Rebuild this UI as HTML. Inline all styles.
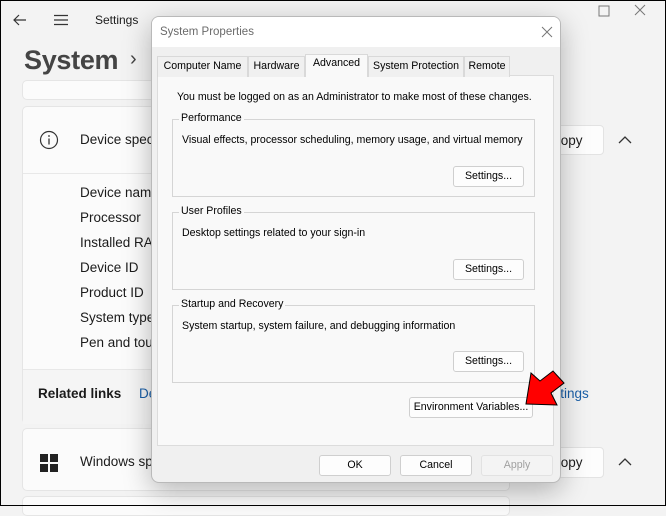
<!DOCTYPE html>
<html><head><meta charset="utf-8"><style>
*{box-sizing:border-box;margin:0;padding:0}
body{width:666px;height:506px;overflow:hidden;background:#f3f3f3;font-family:"Liberation Sans",sans-serif;position:relative;color:#1b1b1b}
.frame{position:absolute;inset:0;border:1px solid #000;pointer-events:none;z-index:50}
.a{position:absolute;white-space:nowrap}
.card{position:absolute;left:22px;width:488px;background:#fbfbfb;border:1px solid #e5e5e5;border-radius:5px}
.lbl{position:absolute;left:80px;font-size:13.5px;color:#1b1b1b}
.dlg{position:absolute;left:151px;top:16px;width:410px;height:467px;background:#f0f0f0;border:1px solid #b9b9b9;border-radius:8px;box-shadow:0 8px 28px rgba(0,0,0,.28);overflow:hidden;z-index:10;font-size:10.6px;color:#000}
.tb{position:absolute;left:0;top:0;width:100%;height:30px;background:#fff}
.tab{position:absolute;top:39px;height:21px;border:1px solid #d9d9d9;border-bottom:none;background:#f0f0f0;font-size:10.6px;text-align:center;line-height:19px}
.panel{position:absolute;left:5px;top:58px;width:397px;height:371px;background:#f9f9f9;border:1px solid #dcdcdc}
.grp{position:absolute;left:15px;width:363px;border:1px solid #d5d5d5}
.grp .t{position:absolute;left:6px;top:-8px;background:#f9f9f9;padding:0 2px}
.btn{position:absolute;height:21px;background:#fdfdfd;border:1px solid #cfcfcf;border-radius:3px;text-align:center;line-height:19px;font-size:10.6px}
</style></head><body>
<div class="frame"></div>
<svg class="a" style="left:12px;top:13px" width="16" height="14"><path d="M14 7H2M7 2L2 7l5 5" stroke="#333" stroke-width="1.2" fill="none"/></svg>
<svg class="a" style="left:53px;top:14px" width="16" height="12"><path d="M1 1.5h14M1 6h14M1 10.5h14" stroke="#333" stroke-width="1.2"/></svg>
<div class="a" style="left:95px;top:13px;font-size:12px">Settings</div>
<div class="a" style="left:24px;top:45px;font-size:27px;font-weight:bold;color:#444;letter-spacing:-0.3px">System</div>
<div class="a" style="left:130px;top:48px;font-size:20px;color:#444">›</div>
<svg class="a" style="left:595px;top:4px" width="60" height="16"><rect x="4" y="2" width="10" height="10" fill="none" stroke="#777"/><path d="M40 1l10 10M50 1L40 11" stroke="#777"/></svg>
<div class="card" style="top:80px;height:20px"></div>
<div class="card" style="top:106px;height:318px">
  <div style="position:absolute;left:0;top:66px;width:100%;border-top:1px solid #e8e8e8"></div>
  <div style="position:absolute;left:0;top:262px;width:100%;height:55px;background:#f5f5f5;border-top:1px solid #e8e8e8"></div>
</div>
<svg class="a" style="left:39px;top:130px" width="20" height="20"><circle cx="10" cy="10" r="8.5" fill="none" stroke="#333" stroke-width="1.2"/><path d="M10 8.5v6" stroke="#333" stroke-width="1.3"/><circle cx="10" cy="6" r=".9" fill="#333"/></svg>
<div class="lbl" style="top:132px">Device specifications</div>
<div class="lbl" style="top:185px">Device name</div>
<div class="lbl" style="top:210px">Processor</div>
<div class="lbl" style="top:235px">Installed RAM</div>
<div class="lbl" style="top:260px">Device ID</div>
<div class="lbl" style="top:285px">Product ID</div>
<div class="lbl" style="top:310px">System type</div>
<div class="lbl" style="top:335px">Pen and touch</div>
<div class="a" style="left:38px;top:386px;font-size:13.5px;font-weight:bold">Related links</div>
<div class="a" style="left:139px;top:386px;font-size:13.5px;color:#1a5fa8">Device</div>
<div class="a" style="left:540px;top:386px;font-size:13.5px;color:#1a5fa8">Settings</div>
<div class="a" style="left:520px;top:125px;width:84px;height:30px;background:#fdfdfd;border:1px solid #e3e3e3;border-radius:4px;font-size:13.5px;padding:7px 0 0 30px">Copy</div>
<svg class="a" style="left:618px;top:135px" width="14" height="10"><path d="M1 8l6-6 6 6" stroke="#333" stroke-width="1.3" fill="none"/></svg>
<div class="card" style="top:428px;height:63px"></div>
<div class="card" style="top:496px;height:20px"></div>
<svg class="a" style="left:40px;top:454px" width="18" height="18"><rect x="0" y="0" width="8" height="8" fill="#222"/><rect x="10" y="0" width="8" height="8" fill="#222"/><rect x="0" y="10" width="8" height="8" fill="#222"/><rect x="10" y="10" width="8" height="8" fill="#222"/></svg>
<div class="lbl" style="top:454px">Windows specifications</div>
<div class="a" style="left:520px;top:447px;width:84px;height:31px;background:#fdfdfd;border:1px solid #e3e3e3;border-radius:4px;font-size:13.5px;padding:7px 0 0 30px">Copy</div>
<svg class="a" style="left:618px;top:457px" width="14" height="10"><path d="M1 8l6-6 6 6" stroke="#333" stroke-width="1.3" fill="none"/></svg>

<div class="dlg">
  <div class="tb"><div class="a" style="left:8px;top:9px;font-size:11.5px;color:#6a6a6a">System Properties</div>
  <svg class="a" style="left:389px;top:9px" width="12" height="12"><path d="M1 1l10 10M11 1L1 11" stroke="#777" stroke-width="1"/></svg></div>
  <div class="panel"></div>
  <div class="tab" style="left:5px;width:91px">Computer Name</div>
  <div class="tab" style="left:96px;width:57px">Hardware</div>
  <div class="tab" style="left:153px;width:63px;top:37px;height:23px;background:#f9f9f9;line-height:17px">Advanced</div>
  <div class="tab" style="left:216px;width:96px">System Protection</div>
  <div class="tab" style="left:312px;width:46px">Remote</div>
  <div class="a" style="left:25px;top:74px">You must be logged on as an Administrator to make most of these changes.</div>
  <div class="grp" style="left:20px;top:102px;height:78px"><span class="t">Performance</span><div class="a" style="left:9px;top:14px">Visual effects, processor scheduling, memory usage, and virtual memory</div><div class="btn" style="left:280px;top:46px;width:71px">Settings...</div></div>
  <div class="grp" style="left:20px;top:195px;height:78px"><span class="t">User Profiles</span><div class="a" style="left:9px;top:14px">Desktop settings related to your sign-in</div><div class="btn" style="left:280px;top:46px;width:71px">Settings...</div></div>
  <div class="grp" style="left:20px;top:288px;height:78px"><span class="t">Startup and Recovery</span><div class="a" style="left:9px;top:14px">System startup, system failure, and debugging information</div><div class="btn" style="left:280px;top:45px;width:71px">Settings...</div></div>
  <div class="btn" style="left:257px;top:380px;width:124px">Environment Variables...</div>
  <div class="btn" style="left:167px;top:438px;width:72px">OK</div>
  <div class="btn" style="left:248px;top:438px;width:72px">Cancel</div>
  <div class="btn" style="left:329px;top:438px;width:72px;color:#a0a0a0;background:#f4f4f4;border-color:#e2e2e2">Apply</div>
</div>
<svg class="a" style="left:0;top:0;z-index:20" width="666" height="506"><polygon points="526,404 531,373 540,381 553,371 564,383 551,393 557,405" fill="#f00" stroke="#000" stroke-width="1"/></svg>
</body></html>
